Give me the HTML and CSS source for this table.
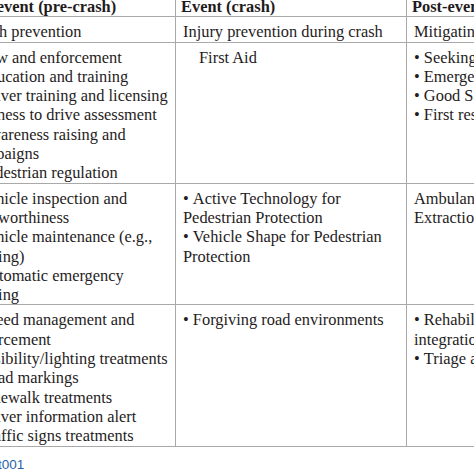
FILE: index.html
```html
<!DOCTYPE html>
<html lang="en">
<head>
<meta charset="utf-8">
<title>Table 1</title>
<link rel="stylesheet" href="styles.css">
</head>
<body>
<div class="frame">
  <table class="matrix">
    <colgroup>
      <col class="c1">
      <col class="c2">
      <col class="c3">
    </colgroup>
    <thead>
      <tr>
        <th>Pre-event (pre-crash)</th>
        <th>Event (crash)</th>
        <th>Post-event (post-crash)</th>
      </tr>
    </thead>
    <tbody>
      <tr>
        <td>Crash prevention</td>
        <td>Injury prevention during crash</td>
        <td class="nw">Mitigating consequences after crash</td>
      </tr>
      <tr>
        <td>
          <ul class="items">
            <li>Law and enforcement</li>
            <li>Education and training</li>
            <li>Driver training and licensing</li>
            <li>Fitness to drive assessment</li>
            <li>Awareness raising and campaigns</li>
            <li>Pedestrian regulation</li>
          </ul>
        </td>
        <td><div class="indent">First Aid</div></td>
        <td class="nw">
          <ul class="items">
            <li>Seeking help</li>
            <li>Emergency call</li>
            <li>Good Samaritan</li>
            <li>First responders</li>
          </ul>
        </td>
      </tr>
      <tr>
        <td>
          <ul class="items">
            <li>Vehicle inspection and roadworthiness</li>
            <li>Vehicle maintenance (e.g., braking)</li>
            <li>Automatic emergency braking</li>
          </ul>
        </td>
        <td>
          <ul class="items">
            <li>Active Technology for Pedestrian Protection</li>
            <li>Vehicle Shape for Pedestrian Protection</li>
          </ul>
        </td>
        <td class="nw">Ambulance<br>Extraction</td>
      </tr>
      <tr>
        <td>
          <ul class="items">
            <li>Speed management and enforcement</li>
            <li>Visibility/lighting treatments</li>
            <li>Road markings</li>
            <li>Sidewalk treatments</li>
            <li>Driver information alert</li>
            <li>Traffic signs treatments</li>
          </ul>
        </td>
        <td>
          <ul class="items">
            <li>Forgiving road environments</li>
          </ul>
        </td>
        <td class="nw">
          <ul class="items">
            <li>Rehabilitation and<br>integration</li>
            <li>Triage and transport</li>
          </ul>
        </td>
      </tr>
    </tbody>
  </table>
  <p class="doi">t001</p>
</div>
</body>
</html>
```
FILE: styles.css
```css
html, body {
  margin: 0;
  padding: 0;
  background: #ffffff;
}

body {
  width: 474px;
  height: 474px;
  overflow: hidden;
}

.frame {
  width: 474px;
  height: 474px;
  overflow: hidden;
}

.matrix {
  border-collapse: collapse;
  table-layout: fixed;
  width: 705px;
  margin-left: -39px;
  margin-top: -9px;
  font-family: "Liberation Serif", "Times New Roman", serif;
  font-size: 16.4px;
  line-height: 19.3px;
  color: #1f1c1d;
}

.c1 { width: 214px; }
.c2 { width: 231px; }
.c3 { width: 260px; }

.matrix th,
.matrix td {
  border: 1px solid #a9a9a9;
  padding: 5px 7px 0;
  vertical-align: top;
  text-align: left;
}

.matrix th {
  font-weight: bold;
  padding-left: 5px;
}

.nw {
  white-space: nowrap;
}

.items {
  list-style: none;
  margin: 0;
  padding: 0;
}

.items li::before {
  content: "\2022\00a0";
}

.indent {
  padding-left: 16px;
}

.doi {
  margin: 11px 0 0 -2px;
  font-family: "Liberation Sans", Arial, sans-serif;
  font-size: 13.5px;
  line-height: 14px;
  color: #2b62ad;
}
```
